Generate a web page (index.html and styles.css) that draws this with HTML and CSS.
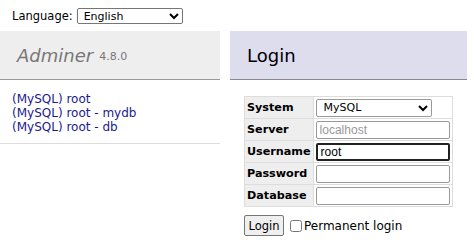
FILE: index.html
```html
<!DOCTYPE html>
<html lang="en">
<head>
    <meta charset="UTF-8">
    <title>Login - Adminer</title>
    <link rel="stylesheet" href="styles.css">
</head>
<body>
    <div class="lang">
        Language:
        <select class="lang-select">
            <option>English</option>
        </select>
    </div>

    <div class="page">
        <div class="menu">
            <h1 class="brand"><span class="name">Adminer</span> <span class="version">4.8.0</span></h1>
            <ul class="links">
                <li><a href="#">(MySQL) root</a></li>
                <li><a href="#">(MySQL) root - mydb</a></li>
                <li><a href="#">(MySQL) root - db</a></li>
            </ul>
        </div>

        <div class="content">
            <h2 class="title">Login</h2>
            <form class="login">
                <table class="fields">
                    <tr>
                        <th>System</th>
                        <td><select class="driver"><option>MySQL</option></select></td>
                    </tr>
                    <tr>
                        <th>Server</th>
                        <td><input type="text" placeholder="localhost"></td>
                    </tr>
                    <tr>
                        <th>Username</th>
                        <td><input type="text" class="focused" value="root"></td>
                    </tr>
                    <tr>
                        <th>Password</th>
                        <td><input type="password"></td>
                    </tr>
                    <tr>
                        <th>Database</th>
                        <td><input type="text"></td>
                    </tr>
                </table>
                <div class="actions">
                    <button type="button" class="btn">Login</button>
                    <label class="perm"><input type="checkbox"> Permanent login</label>
                </div>
            </form>
        </div>
    </div>
</body>
</html>
```

FILE: styles.css
```css
/* --- General --- */
body {
    font-family: 'DejaVu Sans', Verdana, sans-serif;
    font-size: 12px;
    color: #000;
    background: #fff;
    margin: 0;
}

a {
    color: #1a1a8c;
    text-decoration: none;
}

/* --- Language switch --- */
.lang {
    height: 31px;
    padding-left: 12px;
    display: flex;
    align-items: center;
    gap: 4px;
    font-size: 11.5px;
}

.lang-select {
    width: 106px;
    height: 16px;
    font-family: 'DejaVu Sans', sans-serif;
    font-size: 11px;
    padding: 0 2px;
    border: 1px solid #767676;
    border-radius: 2px;
    background: #fff;
}

/* --- Layout --- */
.page {
    display: flex;
    gap: 10px;
}

.menu {
    width: 220px;
    flex-shrink: 0;
}

.content {
    width: 237px;
}

/* --- Menu --- */
.brand {
    margin: 0;
    height: 49px;
    box-sizing: border-box;
    padding-left: 17px;
    display: flex;
    align-items: center;
    gap: 6px;
    background: #eee;
    border-bottom: 1px solid #999;
    font-weight: normal;
}

.brand .name {
    font-size: 18px;
    font-style: italic;
    color: #777;
}

.brand .version {
    font-size: 11px;
    color: #777;
    padding-top: 3px;
}

.links {
    list-style: none;
    margin: 0;
    padding: 12px 12px 9px;
    border-bottom: 1px solid #ddd;
    line-height: 14px;
}

/* --- Login form --- */
.title {
    margin: 0;
    height: 49px;
    box-sizing: border-box;
    padding-left: 17px;
    display: flex;
    align-items: center;
    background: #dde;
    border-bottom: 1px solid #888;
    font-size: 18px;
    font-weight: normal;
}

.login {
    padding: 16px 0 0 14px;
}

.fields {
    border-collapse: collapse;
    border: 1px solid #ccc;
    width: 208px;
}

.fields th,
.fields td {
    border: 1px solid #ddd;
    padding: 1px 2px;
    height: 19px;
}

.fields th {
    background: #eee;
    text-align: left;
    font-weight: bold;
    font-size: 11.2px;
    width: 62px;
}

.fields input,
.fields select {
    width: 134px;
    height: 18px;
    box-sizing: border-box;
    font-family: 'Liberation Sans', Arial, sans-serif;
    font-size: 12px;
    border: 1px solid #999;
    border-radius: 2px;
    padding: 0 3px;
    margin: 0;
    display: block;
}

.fields select.driver {
    width: 116px;
    font-family: 'DejaVu Sans', sans-serif;
    font-size: 11px;
    background: #fff;
}

.fields input::placeholder {
    color: #999;
}

.fields input.focused {
    border: 2px solid #222;
}

.actions {
    display: flex;
    align-items: center;
    gap: 6px;
    margin-top: 8px;
}

.btn {
    width: 40px;
    height: 21px;
    padding: 0;
    font-family: 'DejaVu Sans', sans-serif;
    font-size: 11.5px;
    background: #efefef;
    border: 1px solid #767676;
    border-radius: 2px;
}

.perm {
    display: flex;
    align-items: center;
    gap: 2px;
    font-size: 12px;
}

.perm input {
    margin: 0;
    width: 12px;
    height: 12px;
}
```
